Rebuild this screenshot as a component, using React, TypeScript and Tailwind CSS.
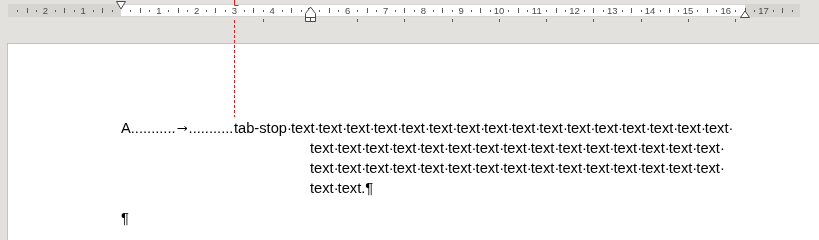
const CM = 37.795;
const ZERO = 121;
const px = (k: number) => ZERO + k * CM;

const quarterTicks: { x: number; long: boolean }[] = [];
for (let q = -11; q <= 71; q++) {
  if (q % 4 === 0) continue;
  quarterTicks.push({ x: Math.round(px(q / 4)), long: Math.abs(q % 4) === 2 });
}

const labels = [-2, -1, 1, 2, 3, 4, 5, 6, 7, 8, 9, 10, 11, 12, 13, 14, 15, 16, 17];

const defaultTabs: number[] = [];
for (let i = 0; i <= 10; i++) defaultTabs.push(Math.round(px(3.75 + i * 1.25)));

// space marks in the font run wider than a real space, pull them in
function Dot() {
  return <span className="tracking-[-0.92px]">·</span>;
}

function Words({ words, lead, tail }: { words: number; lead?: string; tail?: boolean }) {
  const items = Array.from({ length: words }, (_, i) => i);
  return (
    <>
      {lead && (
        <>
          {lead}
          <Dot />
        </>
      )}
      {items.map((i) => (
        <span key={i}>
          text
          {(tail || i < words - 1) && <Dot />}
        </span>
      ))}
    </>
  );
}

function RulerOverlay() {
  return (
    <svg className="pointer-events-none absolute left-0 top-0" width={819} height={120} viewBox="0 0 819 120">
      {quarterTicks.map((t) =>
        t.long ? (
          <rect key={t.x} x={t.x} y={8} width={1} height={5} fill="#5a5a5a" />
        ) : (
          <rect key={t.x} x={t.x} y={10} width={1} height={2} fill="#5a5a5a" />
        )
      )}
      {labels.map((k) => (
        <text
          key={k}
          x={px(k)}
          y={14}
          textAnchor="middle"
          fontSize="9.5"
          fontFamily="'Liberation Sans', Arial, sans-serif"
          fill="#4a4a4a"
        >
          {Math.abs(k)}
        </text>
      ))}

      {/* default tab stops */}
      {defaultTabs.map((x) => (
        <rect key={x} x={x} y={19} width={1} height={3} fill="#5a5a5a" />
      ))}

      {/* first line indent */}
      <polygon points="116.5,1.5 125.5,1.5 121,9" fill="#fff" stroke="#4a4a4a" strokeWidth="1" />

      {/* left / hanging indent */}
      <polygon
        points="305.5,21.5 305.5,13.5 310.5,7 315.5,13.5 315.5,21.5"
        fill="#fff"
        stroke="#4a4a4a"
        strokeWidth="1"
      />
      <path d="M305.5 17.5H315.5M310.5 17.5V21.5" stroke="#4a4a4a" strokeWidth="1" />

      {/* right indent */}
      <polygon points="740.5,17.5 745,11 749.5,17.5" fill="#fff" stroke="#4a4a4a" strokeWidth="1" />

      {/* tab stop */}
      <path d="M234.5 0V5.5H238.5" fill="none" stroke="#e8191b" strokeWidth="1" />
      <line x1="234.5" y1="20" x2="234.5" y2="117" stroke="#e8191b" strokeWidth="1" strokeDasharray="3 2" />
    </svg>
  );
}

export default function App() {
  return (
    <div className="relative flex h-[240px] w-[819px] flex-col overflow-hidden bg-[#e2e1dd] font-['Liberation_Sans',Arial,sans-serif]">
      <div className="ml-[8px] mt-[4px] flex h-[13px] w-[792px] shrink-0 bg-[#d6d5d1]">
        <div className="w-[113px]" />
        <div className="my-px w-[624px] bg-white" />
      </div>

      <div className="ml-[7px] mt-[26px] flex-1 border-l border-t border-[#c3c3c0] bg-white pl-[113px] pt-[74px] text-[14.67px] leading-[20px] text-black [will-change:transform]">
        <div className="flex items-start whitespace-nowrap">
          <span className="flex w-[113px] shrink-0 items-start overflow-hidden">
            <span>A</span>
            <span>...........</span>
            <svg className="block shrink-0" width={13} height={20} viewBox="0 0 13 20">
              <path d="M1.5 10.5H11M8.5 8.5L11 10.5L8.5 12.5" fill="none" stroke="#000" strokeWidth="1" />
            </svg>
            <span>...........</span>
          </span>
          <span>
            <Words lead="tab-stop" words={16} tail />
          </span>
        </div>
        <div className="whitespace-nowrap pl-[189px]">
          <Words words={15} tail />
        </div>
        <div className="whitespace-nowrap pl-[189px]">
          <Words words={15} tail />
        </div>
        <div className="whitespace-nowrap pl-[189px]">
          text
          <Dot />
          text.¶
        </div>
        <div className="mt-[10px]">¶</div>
      </div>

      <RulerOverlay />
    </div>
  );
}
